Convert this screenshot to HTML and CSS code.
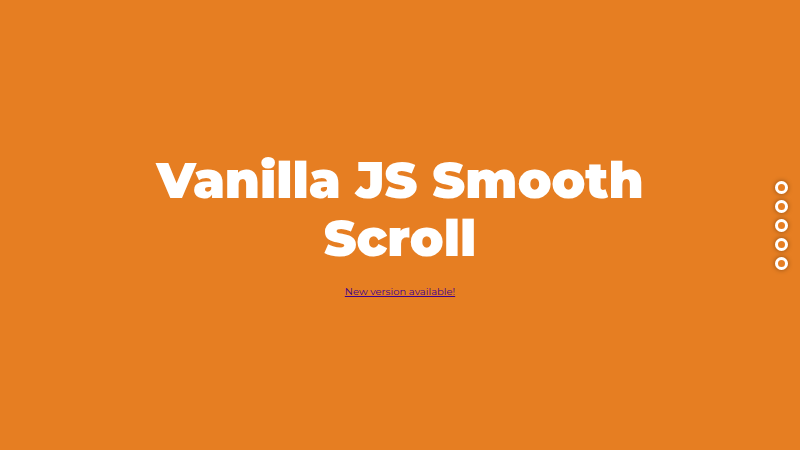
FILE: index.html
```html
<!DOCTYPE html>
<html lang="en">

<head>
    <meta charset="UTF-8">
    <meta name="viewport" content="width=device-width, initial-scale=1.0">
    <title>Vanilla JS Smooth Scroll</title>
    <link rel="stylesheet" href="styles.css">
</head>

<body>

    <nav class="dots">
        <a href="#intro" aria-label="Section 1"></a>
        <a href="#two" aria-label="Section 2"></a>
        <a href="#three" aria-label="Section 3"></a>
        <a href="#four" aria-label="Section 4"></a>
        <a href="#five" aria-label="Section 5"></a>
    </nav>

    <section class="panel" id="intro">
        <h1>Vanilla JS Smooth Scroll</h1>
        <a class="version" href="#two">New version available!</a>
    </section>

</body>

</html>
```
FILE: styles.css
```css
* {
    box-sizing: border-box;
}

body {
    margin: 0;
    font-family: Montserrat, Inter, "Open Sans", sans-serif;
    background-color: #e67e22;
}

.panel {
    display: flex;
    flex-direction: column;
    align-items: center;
    justify-content: center;
    min-height: 100vh;
    padding: 0 140px;
    text-align: center;
}

.panel h1 {
    margin: 0 0 18px;
    color: #fff;
    font-size: 50px;
    font-weight: 900;
    line-height: 58px;
}

.version {
    color: #40008c;
    font-size: 10px;
    line-height: 12px;
}

/* section dots, pinned to the right edge */
.dots {
    position: fixed;
    top: 0;
    right: 12px;
    bottom: 0;
    display: flex;
    flex-direction: column;
    justify-content: center;
    gap: 6px;
}

.dots a {
    width: 13px;
    height: 13px;
    border: 3px solid #fff;
    border-radius: 50%;
    box-shadow: 0 0 5px rgba(0, 0, 0, 0.4);
}
```
